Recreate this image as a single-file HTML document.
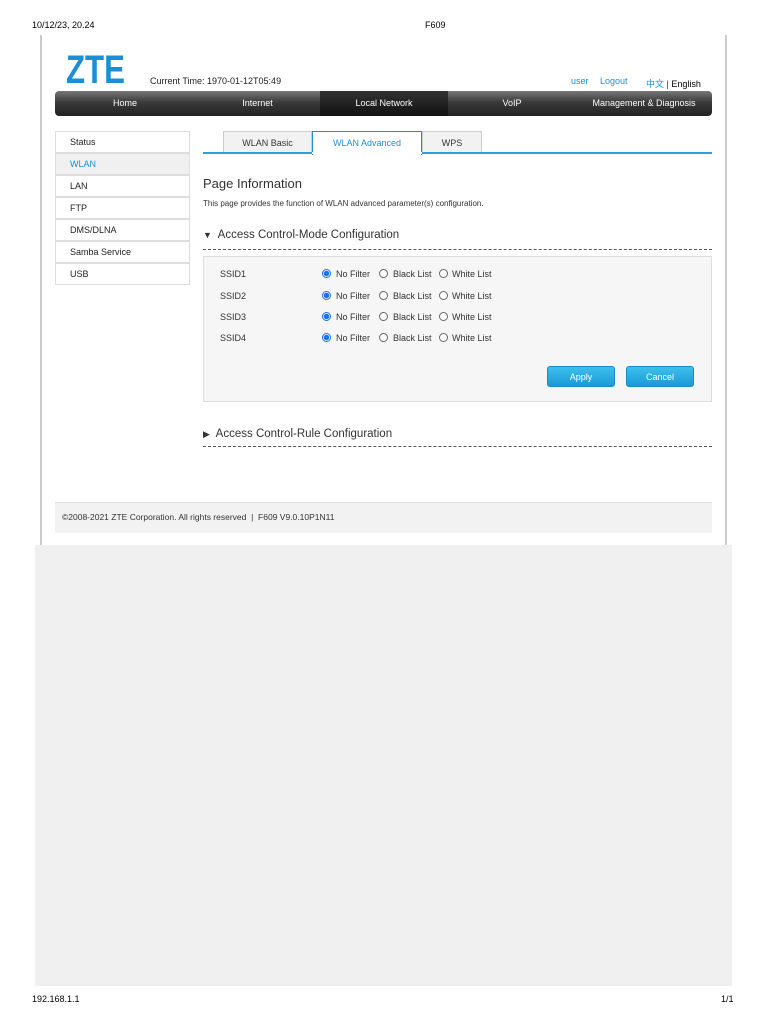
<!DOCTYPE html>
<html><head><style>
*{margin:0;padding:0;box-sizing:border-box}
body{width:768px;height:1024px;background:#fff;position:relative;font-family:"Liberation Sans","DejaVu Sans",sans-serif;overflow:hidden}
.a{position:absolute}
.t{font-size:9px;color:#333;white-space:nowrap}
.hdr{font-size:9px;color:#222}
.nav{left:55px;top:91px;width:657px;height:25px;border-radius:4px;background:linear-gradient(#777,#3a3a3a 45%,#222);}
.nav div{position:absolute;top:0;height:25px;line-height:24px;color:#fff;font-size:9px;text-align:center}
.side{left:55px;width:135px;height:22px;border:1px solid #ddd;background:#fff;font-size:9px;color:#222;line-height:21px;padding-left:14px}
.tab{top:131px;height:22px;border:1px solid #ccc;border-bottom:none;background:#f2f2f2;font-size:9px;color:#333;text-align:center;line-height:22px}
.rad{width:9px;height:9px;border-radius:50%;border:1px solid #666;background:#fff}
.radon{border-color:#1a73e8;background:radial-gradient(#1a73e8 2.5px,#fff 3px)}
.btn{top:366px;height:21px;border-radius:3px;background:linear-gradient(#3cc0ec,#1a9ad6);color:#fff;font-size:9px;text-align:center;line-height:21px;border:1px solid #1a8ccc}
.dash{height:0;border-top:1px dashed #555}
</style></head><body>
<div class="a t" style="left:32px;top:20px;color:#000">10/12/23, 20.24</div>
<div class="a t" style="left:425px;top:20px;color:#000">F609</div>
<div class="a" style="left:40px;top:35px;width:2px;height:510px;background:#ccc"></div>
<div class="a" style="left:725px;top:35px;width:2px;height:510px;background:#ccc"></div>
<div class="a" style="left:35px;top:545px;width:697px;height:441px;background:#f0f0f0"></div>
<div class="a" style="left:66px;top:50px;font-size:40px;font-weight:bold;color:#1a8fd8;transform:scaleX(0.78);transform-origin:left;letter-spacing:0px;line-height:40px">ZTE</div>
<div class="a hdr" style="left:150px;top:76px">Current Time: 1970-01-12T05:49</div>
<div class="a hdr" style="left:571px;top:76px;color:#1a8fd8">user</div>
<div class="a hdr" style="left:600px;top:76px;color:#1a8fd8">Logout</div>
<div class="a hdr" style="left:646px;top:77px;color:#1a8fd8;font-family:'Liberation Sans','Noto Sans CJK SC',sans-serif">中文 <span style="color:#333">|</span> <span style="color:#000">English</span></div>
<div class="a nav">
<div style="left:0;width:140px">Home</div>
<div style="left:140px;width:125px">Internet</div>
<div style="left:265px;width:128px;background:linear-gradient(#333,#111)">Local Network</div>
<div style="left:393px;width:128px">VoIP</div>
<div style="left:521px;width:136px">Management &amp; Diagnosis</div>
</div>
<div class="a side" style="top:131px">Status</div>
<div class="a side" style="top:153px;background:#f0f0f0;color:#1a8fd8">WLAN</div>
<div class="a side" style="top:175px">LAN</div>
<div class="a side" style="top:197px">FTP</div>
<div class="a side" style="top:219px">DMS/DLNA</div>
<div class="a side" style="top:241px">Samba Service</div>
<div class="a side" style="top:263px">USB</div>
<div class="a tab" style="left:223px;width:89px">WLAN Basic</div>
<div class="a tab" style="left:312px;width:110px;background:#fff;border-color:#1a8fd8;color:#1a8fd8;height:24px">WLAN Advanced</div>
<div class="a tab" style="left:422px;width:60px">WPS</div>
<div class="a" style="left:203px;top:152px;width:509px;height:2px;background:#2aa0dc"></div>
<div class="a" style="left:312px;top:152px;width:110px;height:2px;background:#fff"></div>
<div class="a" style="left:203px;top:176px;font-size:13px;color:#333">Page Information</div>
<div class="a t" style="left:203px;top:199px;font-size:8px">This page provides the function of WLAN advanced parameter(s) configuration.</div>
<div class="a" style="left:203px;top:229px;font-size:11.5px;color:#333"><span style="font-size:9px">▼</span>&nbsp; Access Control-Mode Configuration</div>
<div class="a dash" style="left:203px;top:249px;width:509px"></div>
<div class="a" style="left:203px;top:256px;width:509px;height:146px;background:#f6f6f6;border:1px solid #ddd"></div>
<div class="a t" style="left:220px;top:269px">SSID1</div>
<div class="a t" style="left:220px;top:291px">SSID2</div>
<div class="a t" style="left:220px;top:312px">SSID3</div>
<div class="a t" style="left:220px;top:333px">SSID4</div>
<div class="a" style="left:322px;top:269px">
<div style="position:relative;height:85px">
<div class="a" style="top:0"><div class="a rad radon" style="left:0;top:0"></div><div class="a t" style="left:14px;top:0">No Filter</div><div class="a rad" style="left:57px;top:0"></div><div class="a t" style="left:71px;top:0">Black List</div><div class="a rad" style="left:117px;top:0"></div><div class="a t" style="left:130px;top:0">White List</div></div>
<div class="a" style="top:22px"><div class="a rad radon" style="left:0;top:0"></div><div class="a t" style="left:14px;top:0">No Filter</div><div class="a rad" style="left:57px;top:0"></div><div class="a t" style="left:71px;top:0">Black List</div><div class="a rad" style="left:117px;top:0"></div><div class="a t" style="left:130px;top:0">White List</div></div>
<div class="a" style="top:43px"><div class="a rad radon" style="left:0;top:0"></div><div class="a t" style="left:14px;top:0">No Filter</div><div class="a rad" style="left:57px;top:0"></div><div class="a t" style="left:71px;top:0">Black List</div><div class="a rad" style="left:117px;top:0"></div><div class="a t" style="left:130px;top:0">White List</div></div>
<div class="a" style="top:64px"><div class="a rad radon" style="left:0;top:0"></div><div class="a t" style="left:14px;top:0">No Filter</div><div class="a rad" style="left:57px;top:0"></div><div class="a t" style="left:71px;top:0">Black List</div><div class="a rad" style="left:117px;top:0"></div><div class="a t" style="left:130px;top:0">White List</div></div>
</div></div>
<div class="a btn" style="left:547px;width:68px">Apply</div>
<div class="a btn" style="left:626px;width:68px">Cancel</div>
<div class="a" style="left:203px;top:428px;font-size:11.5px;color:#333"><span style="font-size:9px">▶</span>&nbsp; Access Control-Rule Configuration</div>
<div class="a dash" style="left:203px;top:446px;width:509px"></div>
<div class="a" style="left:55px;top:502px;width:657px;height:31px;background:#f2f2f2;border-top:1px solid #e0e0e0"></div>
<div class="a t" style="left:62px;top:512px;font-size:8.5px">©2008-2021 ZTE Corporation. All rights reserved &nbsp;| &nbsp;F609 V9.0.10P1N11</div>
<div class="a t" style="left:32px;top:994px;color:#000">192.168.1.1</div>
<div class="a t" style="left:721px;top:994px;color:#000">1/1</div>
</body></html>
